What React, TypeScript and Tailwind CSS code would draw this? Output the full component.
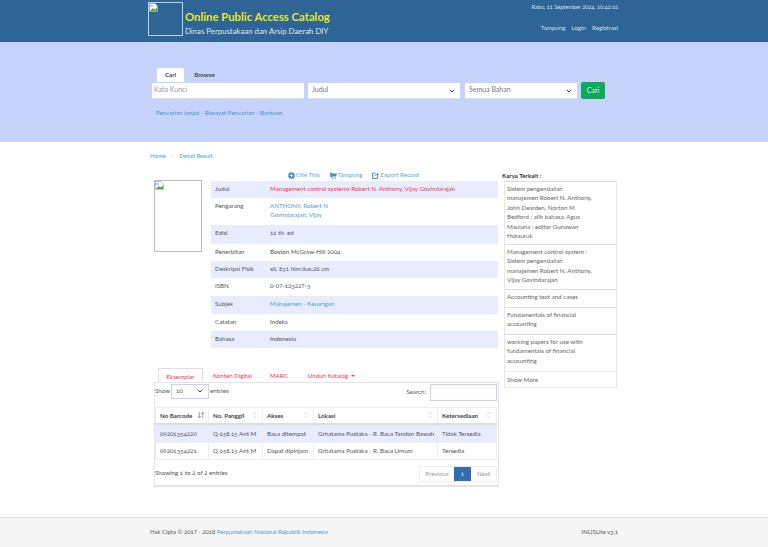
import { ChevronDown, ArrowDownUp, ChevronsUpDown } from "lucide-react";

const rows = [
  { label: "Judul", h: "h-[17px]", value: "Management control systems Robert N. Anthony, Vijay Govindarajan", color: "text-[#f5334a]" },
  { label: "Pengarang", h: "h-[27px]", value: "", color: "" },
  { label: "Edisi", h: "h-[19px]", value: "11 th. ed", color: "text-[#555]" },
  { label: "Penerbitan", h: "h-[17px]", value: "Boston McGraw-Hill 2004", color: "text-[#555]" },
  { label: "Deskripsi Fisik", h: "h-[17px]", value: "xii, 851 hlm:ilus;26 cm", color: "text-[#555]" },
  { label: "ISBN", h: "h-[18px]", value: "0-07-123227-3", color: "text-[#555]" },
  { label: "Subjek", h: "h-[18px]", value: "Manajemen - Keuangan", color: "text-[#4b9cd3]" },
  { label: "Catatan", h: "h-[17px]", value: "Indeks", color: "text-[#555]" },
  { label: "Bahasa", h: "h-[17px]", value: "Indonesia", color: "text-[#555]" },
];

const related = [
  { h: "h-[63px]", text: "Sistem pengendalian manajemen Robert N. Anthony, John Dearden, Norton M. Bedford ; alih bahasa, Agus Maulana ; editor Gunawan Hutauruk" },
  { h: "h-[45px]", text: "Management control system : Sistem pengendalian manajemen Robert N. Anthony, Vijay Govindarajan" },
  { h: "h-[18px]", text: "Accounting text and cases" },
  { h: "h-[27px]", text: "Fundamentals of financial accounting" },
  { h: "h-[37px]", text: "working papers for use with fundamentals of financial accounting" },
];

const eksemplar = [
  ["09201354220", "Q 658.15 Ant M", "Baca ditempat", "Grhatama Pustaka - R. Baca Tandon Bawah", "Tidak Tersedia"],
  ["09201354221", "Q 658.15 Ant M", "Dapat dipinjam", "Grhatama Pustaka - R. Baca Umum", "Tersedia"],
];

const columns = [
  { name: "No Barcode", w: "w-[53px]" },
  { name: "No. Panggil", w: "w-[54px]" },
  { name: "Akses", w: "w-[51px]" },
  { name: "Lokasi", w: "w-[124px]" },
  { name: "Ketersediaan", w: "w-[59px]" },
];

function BrokenImage() {
  return (
    <svg width="9" height="9" viewBox="0 0 9 9" className="block">
      <path d="M0.5 0.5h5.5l2.5 2.5v5.5h-8z" fill="#fff" stroke="#9aa5b1" strokeWidth="0.7" />
      <path d="M1 8l2.5-3 2 1.5 2.5-2v3.5z" fill="#4caf50" />
      <path d="M1 2h3v2h-3z" fill="#a9c7f0" />
    </svg>
  );
}

function Selectish({ label, w }: { label: string; w: string }) {
  return (
    <div className={`${w} h-[16px] bg-white border-b border-[#dcdfe8] flex items-center justify-between pl-[4px] pr-[4px] text-[7px] text-[#777]`}>
      <span className="-mt-[2px]">{label}</span>
      <ChevronDown size={8} strokeWidth={3} className="text-[#444]" />
    </div>
  );
}

export default function App() {
  return (
    <div className="h-[547px] w-[768px] overflow-hidden bg-white font-['Lato',sans-serif] text-[6.2px] leading-[9.5px] oldstyle-nums text-[#555]">
      {/* header */}
      <div className="h-[42px] bg-[#2f6497]">
        <div className="w-[472px] mx-auto flex justify-between">
          <div className="flex pt-[2px]">
            <div className="w-[35px] h-[34px] border border-[#c3cfdc]">
              <BrokenImage />
            </div>
            <div className="ml-[2px]">
              <p className="mt-[7px] text-[11.3px] leading-[15px] font-bold text-[#e4ea1c]">Online Public Access Catalog</p>
              <p className="mt-[2px] text-[7.8px] leading-[10px] text-[#dfe7f0]">Dinas Perpustakaan dan Arsip Daerah DIY</p>
            </div>
          </div>
          <div className="flex flex-col items-end pr-[2px] text-[#d5e0ec]">
            <p className="mt-[2px] text-[5.6px]">Rabu, 11 September 2024, 10:42:16</p>
            <div className="flex gap-[6px] mt-[11px] text-[6.2px]">
              <span>Tampung</span>
              <span>Login</span>
              <span>Registrasi</span>
            </div>
          </div>
        </div>
      </div>

      {/* pencarian */}
      <div className="h-[100px] bg-[#c5d3fd] pt-[26px]">
        <div className="w-[472px] mx-auto pl-[4px]">
          <div className="flex ml-[5px] h-[14px] font-bold text-[#444] text-[6.2px]">
            <span className="bg-white h-full px-[8px] pt-[2px] rounded-t-[2px]">Cari</span>
            <span className="ml-[2px] px-[8px] pt-[2px]">Browse</span>
          </div>
          <div className="flex items-start mt-px">
            <div className="w-[152px] h-[16px] bg-white border-b border-[#dcdfe8] pl-[2px] pt-[2px] text-[7px] text-[#999]">Kata Kunci</div>
            <div className="ml-[4px]">
              <Selectish label="Judul" w="w-[152px]" />
            </div>
            <div className="ml-[5px]">
              <Selectish label="Semua Bahan" w="w-[112px]" />
            </div>
            <div className="ml-[4px] -mt-px w-[24px] h-[17px] rounded-[2px] bg-[#0fa85c] text-[7px] text-[#dff5e8] flex items-center justify-center">Cari</div>
          </div>
          <p className="mt-[9px] ml-[4px] text-[#4b93c9]">Pencarian lanjut - Riwayat Pencarian - Bantuan</p>
        </div>
      </div>

      {/* isi */}
      <div className="w-[472px] mx-auto h-[375px]">
        <div className="flex gap-[5px] pl-[2px] pt-[9px] text-[#4b9cd3] text-[6px]">
          <span>Home</span>
          <span className="text-[#ccc]">&gt;</span>
          <span>Detail Result</span>
        </div>
        <div className="flex mt-[10px]">
          <div className="w-[351px] shrink-0">
            <div className="flex justify-end gap-[10px] pr-[80px] h-[9px] items-center text-[#5ba5d8]">
              <span className="flex items-center gap-[1px]">
                <svg width="7" height="7" viewBox="0 0 7 7">
                  <circle cx="3.5" cy="3.5" r="3.2" fill="#3d8fc8" />
                  <path d="M3.5 1.8v3.4M1.8 3.5h3.4" stroke="#fff" strokeWidth="1" />
                </svg>
                Cite This
              </span>
              <span className="flex items-center gap-[1px]">
                <svg width="7" height="7" viewBox="0 0 7 7">
                  <path d="M0 0.5h1.5l.4 1h5l-.7 3h-4l-.2 .7h-1.6z" fill="#3d8fc8" />
                  <circle cx="2.4" cy="6.2" r=".7" fill="#3d8fc8" />
                  <circle cx="5.2" cy="6.2" r=".7" fill="#3d8fc8" />
                </svg>
                Tampung
              </span>
              <span className="flex items-center gap-[1px]">
                <svg width="7" height="7" viewBox="0 0 7 7">
                  <path d="M3.5 1.2H.6v5.2h5V4.2" fill="none" stroke="#3d8fc8" strokeWidth="1" />
                  <path d="M2 4.6c.3-1.6 1.4-2.4 3-2.4V.8L7 2.6 5 4.4V3.2c-1.3 0-2.2.4-3 1.4z" fill="#3d8fc8" />
                </svg>
                Export Record
              </span>
            </div>
            <div className="flex pl-[6px] mt-[1px]">
              <div className="w-[48px] h-[72px] mt-[-1px] border border-[#bbb]">
                <BrokenImage />
              </div>
              <div className="ml-[9px] w-[287px]">
                {rows.map((row, i) => (
                  <div key={row.label} className={`${row.h} flex ${i % 2 === 0 ? "bg-[#e8ecfe]" : "bg-white"} pl-[4px] pt-[3px]`}>
                    <span className="w-[55px] shrink-0">{row.label}</span>
                    {row.label === "Pengarang" ? (
                      <div className="text-[#4b9cd3]">
                        <p>ANTHONY, Robert N</p>
                        <p>Govindarajan, Vijay</p>
                      </div>
                    ) : (
                      <span className={row.color}>{row.value}</span>
                    )}
                  </div>
                ))}
              </div>
            </div>
          </div>
          <div className="ml-[4px] w-[115px]">
            <p className="font-bold text-[#333] h-[9px] -ml-px">Karya Terkait :</p>
            <div className="mt-[1px] ml-px border-x border-[#e6e6e6] w-[113px]">
              {related.map((r) => (
                <div key={r.text} className={`${r.h} border-t border-[#ddd] pl-[2px] pr-[22px] pt-[2px] text-[#666]`}>{r.text}</div>
              ))}
              <div className="h-[17px] border-t border-[#eee] border-b pl-[2px] pt-[3px] text-[#666]">Show More</div>
            </div>
          </div>
        </div>

        {/* tab eksemplar */}
        <div className="-mt-[20px] ml-[10px] w-[344px] flex h-[14px] text-[#f5334a]">
          <span className="h-full w-[45px] text-center pt-[3px] bg-white border border-b-0 border-[#ddd]">Eksemplar</span>
          <span className="ml-[10px] pt-[3px]">Konten Digital</span>
          <span className="ml-[18px] pt-[3px]">MARC</span>
          <span className="ml-[20px] pt-[3px] flex items-start gap-[3px]">
            Unduh Katalog
            <span className="mt-[4px] border-x-[2px] border-t-[2px] border-x-transparent border-t-[#f5334a]" />
          </span>
        </div>
        <div className="ml-[6px] w-[345px] h-[105px] border border-b-2 border-[#e4e4e4] pt-[1px]">
          <div className="flex justify-between h-[23px] pr-px">
            <div className="flex items-start gap-[1px]">
              <span className="mt-[2px]">Show</span>
              <div className="w-[38px] h-[15px] border border-[#cbd3e8] flex items-center justify-between px-[4px]">
                <span>10</span>
                <ChevronDown size={8} strokeWidth={3} className="text-[#444]" />
              </div>
              <span className="mt-[2px]">entries</span>
            </div>
            <div className="flex items-start gap-[4px]">
              <span className="mt-[3px]">Search:</span>
              <div className="w-[67px] h-[17px] border border-[#cbd3e8]" />
            </div>
          </div>
          <table className="w-[341px] table-fixed border-collapse">
            <thead>
              <tr className="h-[17px] border-b-2 border-[#ddd]">
                {columns.map((c, i) => (
                  <th key={c.name} className={`${c.w} border-x border-t border-[#eee] text-left font-bold pl-[4px] text-[#444]`}>
                    <div className="flex items-center justify-between pr-[3px]">
                      <span className="whitespace-nowrap">{c.name}</span>
                      {i === 0 ? (
                        <ArrowDownUp size={8} className="text-[#777]" />
                      ) : (
                        <ChevronsUpDown size={8} className="text-[#ccc]" />
                      )}
                    </div>
                  </th>
                ))}
              </tr>
            </thead>
            <tbody>
              {eksemplar.map((row, i) => (
                <tr key={row[0]} className={`${i === 0 ? "bg-[#e8ecfe] h-[18px]" : "bg-white h-[17px]"} border-b border-[#eee]`}>
                  {row.map((cell) => (
                    <td key={cell} className="border-x border-[#eee] pl-[4px] whitespace-nowrap">{cell}</td>
                  ))}
                </tr>
              ))}
            </tbody>
          </table>
          <div className="flex justify-between items-start pr-px">
            <span className="mt-[8px]">Showing 1 to 2 of 2 entries</span>
            <div className="flex mt-[6px] h-[16px] text-[#999] border border-[#eee] rounded-[1px]">
              <span className="w-[34px] flex items-center justify-center">Previous</span>
              <span className="w-[17px] bg-[#2f6fb0] text-[#dbe7f5] flex items-center justify-center">1</span>
              <span className="w-[25px] flex items-center justify-center">Next</span>
            </div>
          </div>
        </div>
      </div>

      {/* footer */}
      <div className="h-[30px] bg-[#f5f5f5] border-t border-[#e2e2e2]">
        <div className="w-[468px] mx-auto flex justify-between pt-[9px] text-[6px]">
          <p>Hak Cipta © 2017 - 2018 <span className="text-[#4b9cd3]">Perpustakaan Nasional Republik Indonesia</span></p>
          <p>INLISLite v3.1</p>
        </div>
      </div>
    </div>
  );
}
